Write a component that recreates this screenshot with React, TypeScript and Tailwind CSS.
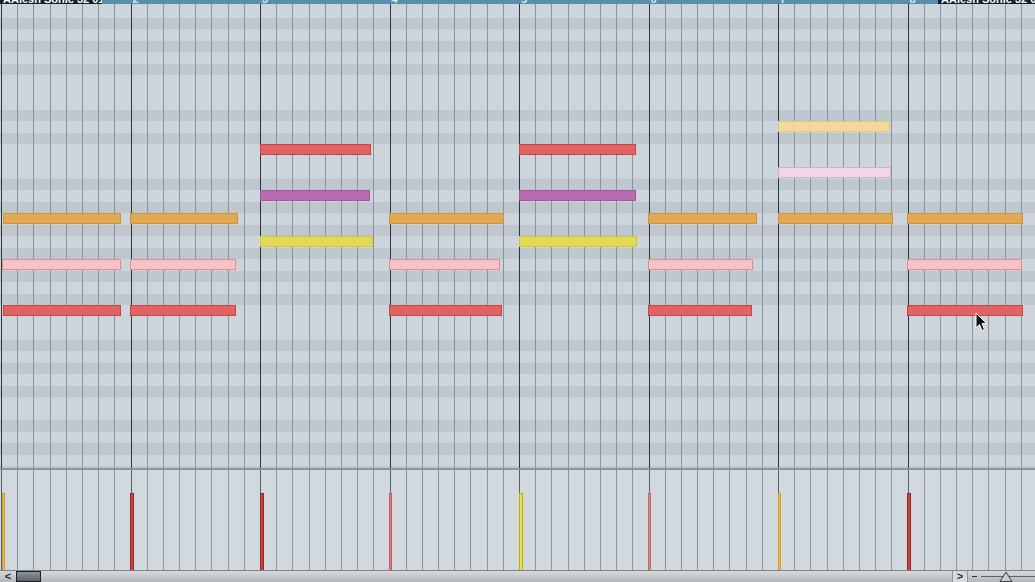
import React from 'react';

const ROW = 11.5;

// rows that read darker in the piano roll background
const darkRows = new Set([1, 3, 5, 9, 11, 15, 17, 19, 21, 23, 25, 29, 31, 33, 36, 38, 40]);

const tones: Record<string, string> = {
  orange: 'bg-[#e0a953] border-[#cd9340]',
  pink: 'bg-[#f5c3c6] border-[#e38b91]',
  red: 'bg-[#e26363] border-[#c84444]',
  purple: 'bg-[#b96bb2] border-[#a0559a]',
  yellow: 'bg-[#e2da55] border-[#cfc53e]',
  tan: 'bg-[#f3d99c] border-[#e6c67e]',
  lilac: 'bg-[#f3d4ea] border-[#d8abc8]',
};

type Note = { x: number; end: number; row: number; tone: string };

const notes: Note[] = [
  { x: 3, end: 121, row: 18, tone: 'orange' },
  { x: 2, end: 121, row: 22, tone: 'pink' },
  { x: 3, end: 121, row: 26, tone: 'red' },
  { x: 130, end: 238, row: 18, tone: 'orange' },
  { x: 130, end: 236, row: 22, tone: 'pink' },
  { x: 130, end: 236, row: 26, tone: 'red' },
  { x: 260, end: 371, row: 12, tone: 'red' },
  { x: 260, end: 370, row: 16, tone: 'purple' },
  { x: 260, end: 373, row: 20, tone: 'yellow' },
  { x: 389, end: 504, row: 18, tone: 'orange' },
  { x: 389, end: 500, row: 22, tone: 'pink' },
  { x: 389, end: 502, row: 26, tone: 'red' },
  { x: 519, end: 636, row: 12, tone: 'red' },
  { x: 519, end: 636, row: 16, tone: 'purple' },
  { x: 519, end: 637, row: 20, tone: 'yellow' },
  { x: 648, end: 757, row: 18, tone: 'orange' },
  { x: 648, end: 753, row: 22, tone: 'pink' },
  { x: 648, end: 752, row: 26, tone: 'red' },
  { x: 778, end: 890, row: 10, tone: 'tan' },
  { x: 778, end: 891, row: 14, tone: 'lilac' },
  { x: 778, end: 893, row: 18, tone: 'orange' },
  { x: 907, end: 1023, row: 18, tone: 'orange' },
  { x: 907, end: 1022, row: 22, tone: 'pink' },
  { x: 907, end: 1023, row: 26, tone: 'red' },
];

const velocities = [
  { x: 2, w: 3, cls: 'bg-[#f0c24a] border-[#c99a30]' },
  { x: 130, w: 4, cls: 'bg-[#c94343] border-[#8f2a2a]' },
  { x: 260, w: 4, cls: 'bg-[#c94343] border-[#8f2a2a]' },
  { x: 389, w: 3, cls: 'bg-[#e77f7f] border-[#c05a5a]' },
  { x: 519, w: 4, cls: 'bg-[#ece43c] border-[#b8a820]' },
  { x: 648, w: 3, cls: 'bg-[#ea8d8d] border-[#c56565]' },
  { x: 778, w: 3, cls: 'bg-[#f2c24e] border-[#cc9a2e]' },
  { x: 907, w: 4, cls: 'bg-[#c94343] border-[#8f2a2a]' },
];

const Columns: React.FC<{ lane?: boolean }> = ({ lane }) => (
  <div className="absolute inset-0 flex pl-[1px] pointer-events-none">
    {Array.from({ length: 64 }).map((_, i) => (
      <div
        key={i}
        className={`w-[16.1875px] shrink-0 border-l ${
          i % 8 === 0 ? (lane ? 'border-[#59626a]' : 'border-[#2c343c]') : 'border-[#8a939a]'
        }`}
      />
    ))}
  </div>
);

const Header = () => (
  <div className="h-[4px] shrink-0 overflow-hidden bg-[#5a8cab]">
    <div className="flex h-[16px] -mt-[9px] text-[11px] leading-[16px] font-bold">
      {Array.from({ length: 8 }).map((_, i) => (
        <div key={i} className="w-[129.5px] shrink-0 flex">
          {i === 0 ? (
            <div className="w-[102px] bg-[#14202c] text-white pl-[3px] whitespace-nowrap overflow-hidden">
              AAlesh Sonic 32 01
            </div>
          ) : (
            <span className="pl-[3px] text-[#d2e8f6]">{i + 1}</span>
          )}
          {i === 7 && (
            <div className="ml-auto w-[98px] bg-[#14202c] text-white pl-[3px] whitespace-nowrap overflow-hidden">
              AAlesh Sonic 32 01
            </div>
          )}
        </div>
      ))}
    </div>
  </div>
);

const Cursor = () => (
  <svg className="absolute left-[975px] top-[312px]" width="13" height="20" viewBox="0 0 13 20">
    <path d="M1 1 L1 16 L4.5 12.5 L7 18.5 L9.5 17.5 L7 11.5 L11.5 11.5 Z" fill="#111" stroke="#fff" strokeWidth="1" strokeLinejoin="round" />
  </svg>
);

export default function App() {
  return (
    <div
      className="relative w-[1035px] h-[582px] overflow-hidden flex flex-col bg-[#cdd6dc]"
      style={{ fontFamily: '"Liberation Sans", Arial, sans-serif' }}
    >
      <Header />

      {/* note grid */}
      <div className="relative h-[464px] shrink-0 overflow-hidden">
        <div className="flex flex-col -mt-[9.5px]">
          {Array.from({ length: 42 }).map((_, i) => (
            <div
              key={i}
              className={`h-[11.5px] shrink-0 ${darkRows.has(i - 1) ? 'bg-[#bec7cd]' : 'bg-[#ccd5db]'}`}
            />
          ))}
        </div>
        <Columns />
        {notes.map((n, i) => (
          <div
            key={i}
            className={`absolute h-[11px] border ${tones[n.tone]}`}
            style={{ left: n.x, top: 1.5 + ROW * n.row, width: n.end - n.x }}
          />
        ))}
      </div>

      <div className="h-[2px] shrink-0 bg-[#8d959a]" />

      {/* velocity lane */}
      <div className="relative h-[100px] shrink-0 bg-[#d1d9de]">
        <Columns lane />
        {velocities.map((v, i) => (
          <div
            key={i}
            className={`absolute top-[23px] bottom-0 border-x border-t ${v.cls}`}
            style={{ left: v.x, width: v.w }}
          />
        ))}
      </div>

      {/* scroll bar */}
      <div className="h-[12px] shrink-0 flex border-t border-[#7d8387] bg-gradient-to-b from-[#d7dadc] to-[#b3b7ba] text-[#2a2e32]">
        <div className="w-[16px] flex items-center justify-center text-[11px] leading-none font-bold">&lt;</div>
        <div className="w-[25px] border border-[#1b1f23] bg-gradient-to-b from-[#8d959b] to-[#59626a]" />
        <div className="flex-1" />
        <div className="w-[16px] flex items-center justify-center border-x border-[#8f9599] bg-[#d9dcde] text-[11px] leading-none font-bold">
          &gt;
        </div>
        <div className="relative w-[67px] flex items-center">
          <span className="ml-[4px] w-[5px] h-[1px] bg-[#2a2e32]" />
          <div className="ml-[4px] flex-1 h-[1px] bg-[#5d6368]" />
          <svg className="absolute left-[31px] top-[0px]" width="14" height="11" viewBox="0 0 14 11">
            <path d="M7 1 L13 10.5 L1 10.5 Z" fill="#c9cdd0" stroke="#3a3f44" strokeWidth="1" />
          </svg>
        </div>
      </div>

      <Cursor />
    </div>
  );
}
